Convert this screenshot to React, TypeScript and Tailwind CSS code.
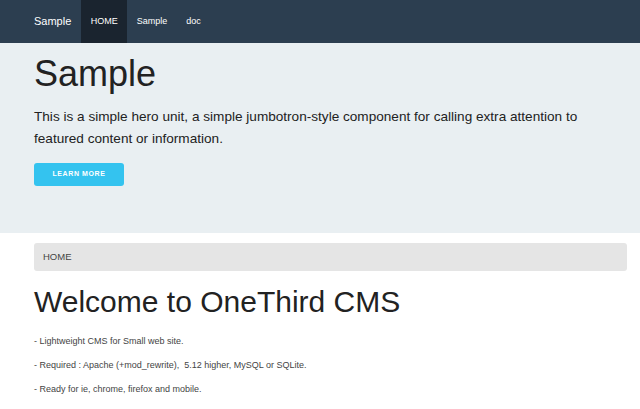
const font = { fontFamily: '"Liberation Sans", Arial, sans-serif' }

const navLinks = ['HOME', 'Sample', 'doc']

const features = [
  '- Lightweight CMS for Small web site.',
  '- Required : Apache (+mod_rewrite),  5.12 higher, MySQL or SQLite.',
  '- Ready for ie, chrome, firefox and mobile.',
]

function Navbar() {
  return (
    <nav className="flex h-[43px] items-stretch bg-[#2c3e50] pl-[34px]">
      <a className="flex items-center pr-[10px] text-[11px] text-white">Sample</a>
      <ul className="flex items-stretch">
        {navLinks.map((label, i) => (
          <li
            key={label}
            className={`flex items-center px-[9.5px] text-[9px] text-white ${i === 0 ? 'bg-[#1a242f]' : ''}`}
          >
            {label}
          </li>
        ))}
      </ul>
    </nav>
  )
}

function Hero() {
  return (
    <section className="h-[190px] bg-[#e9eff2] px-[34px] pt-[9px]">
      <h1 className="text-[36px] leading-[44px] text-[#222]">Sample</h1>
      <p className="mt-[10px] w-[560px] text-[13.6px] leading-[22px] text-[#222]">
        This is a simple hero unit, a simple jumbotron-style component for calling extra attention to featured
        content or information.
      </p>
      <button className="mt-[13px] h-[23px] w-[90px] rounded-[3px] bg-[#34c3ef] text-[7px] font-bold tracking-[0.6px] text-white">
        LEARN MORE
      </button>
    </section>
  )
}

export default function App() {
  return (
    <div className="min-h-[409px] bg-white" style={font}>
      <Navbar />
      <Hero />
      <main className="ml-[34px] w-[593px] pt-[10px]">
        <div className="flex h-[28px] items-center rounded-[3px] bg-[#e5e5e5] px-[9px] text-[9.5px] text-[#444]">
          HOME
        </div>
        <h2 className="mt-[13px] text-[30px] leading-[36px] text-[#222]">Welcome to OneThird CMS</h2>
        <div className="mt-[15px] flex flex-col gap-[12px] text-[9px] leading-[12px] text-[#444]">
          {features.map((f) => (
            <p key={f} className="whitespace-pre">{f}</p>
          ))}
        </div>
      </main>
    </div>
  )
}
